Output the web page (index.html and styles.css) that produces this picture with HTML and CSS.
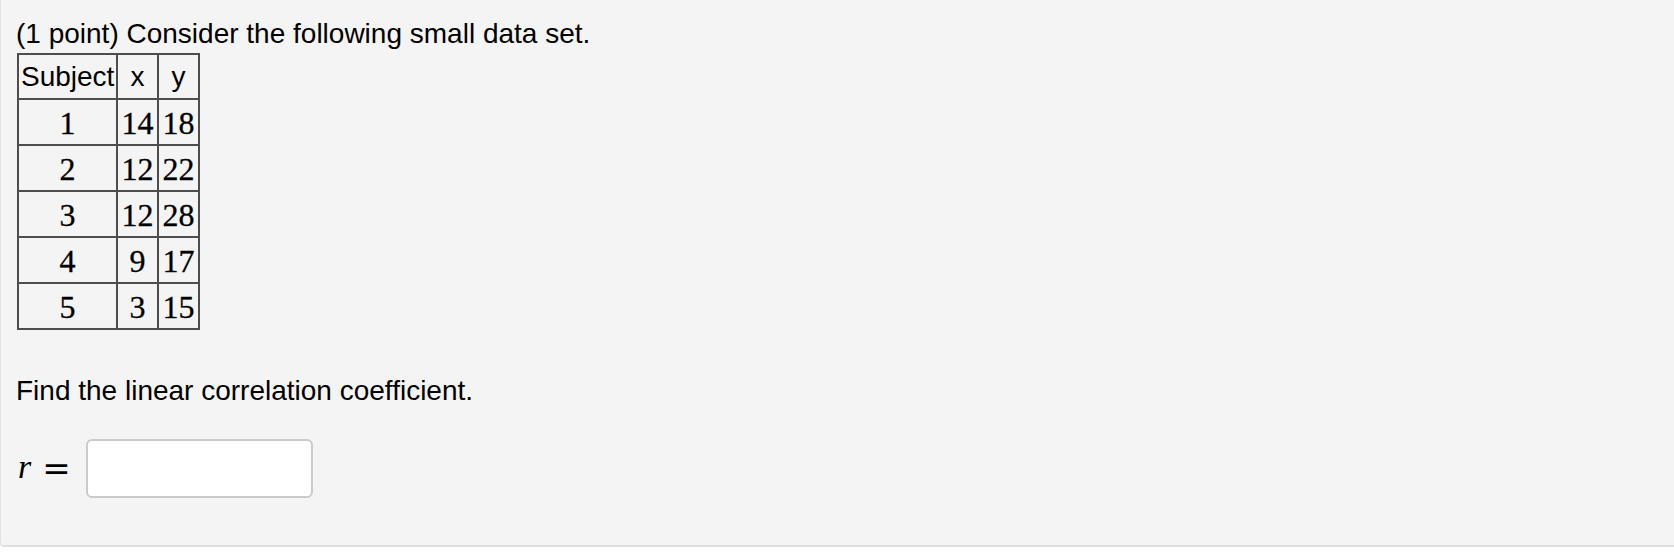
FILE: index.html
```html
<!DOCTYPE html>
<html>
<head>
<meta charset="utf-8">
<link rel="stylesheet" href="styles.css">
</head>
<body>
<div class="problem">
  <div class="title">(1 point) Consider the following small data set.</div>
  <table class="data">
    <tr class="head"><td class="c-subj">Subject</td><td class="c-num">x</td><td class="c-num">y</td></tr>
    <tr><td class="math">1</td><td class="math">14</td><td class="math">18</td></tr>
    <tr><td class="math">2</td><td class="math">12</td><td class="math">22</td></tr>
    <tr><td class="math">3</td><td class="math">12</td><td class="math">28</td></tr>
    <tr><td class="math">4</td><td class="math">9</td><td class="math">17</td></tr>
    <tr><td class="math">5</td><td class="math">3</td><td class="math">15</td></tr>
  </table>
  <p class="question">Find the linear correlation coefficient.</p>
  <div class="answer">
    <span class="mvar">r</span><span class="meq">=</span>
    <input class="box" type="text">
  </div>
</div>
</body>
</html>
```
FILE: styles.css
```css
html, body {
  margin: 0;
  padding: 0;
  background: #ffffff;
}
.problem {
  box-sizing: border-box;
  height: 547px;
  background: #f4f4f4;
  border-left: 1px solid #e2e2e2;
  border-bottom: 2px solid #e0e0e0;
  border-bottom-left-radius: 4px;
  padding: 17px 0 0 15px;
  font-family: "Liberation Sans", Arial, sans-serif;
  font-size: 28px;
  line-height: 34px;
  color: #000;
}
.title {
  white-space: nowrap;
}
.data {
  margin: 2px 0 0 1px;
  border-collapse: separate;
  border-spacing: 0;
  border-top: 2px solid #4d4d4d;
  border-left: 2px solid #4d4d4d;
}
.data td {
  box-sizing: border-box;
  padding: 0;
  height: 46px;
  border-right: 2px solid #4d4d4d;
  border-bottom: 2px solid #4d4d4d;
  text-align: center;
  vertical-align: middle;
}
.data td:nth-child(1) { width: 99px; }
.data td:nth-child(2) { width: 41px; }
.data td:nth-child(3) { width: 41px; }
.data .head td {
  height: 45px;
  font-size: 28px;
  line-height: 32px;
}
.data .head .c-subj {
  text-align: left;
  padding-left: 2px;
}
.data td.math {
  font-family: "Liberation Serif", "Times New Roman", serif;
  font-size: 32px;
  line-height: 34px;
  padding-top: 1px;
  -webkit-text-stroke: 0.3px #000;
}
.question {
  margin: 44px 0 0 0;
  white-space: nowrap;
}
.answer {
  display: flex;
  align-items: center;
  margin-top: 31px;
  padding-left: 2px;
}
.mvar {
  font-family: "Liberation Serif", "Times New Roman", serif;
  font-style: italic;
  font-size: 34px;
  line-height: 40px;
  margin-right: 11px;
  margin-top: -4px;
}
.meq {
  font-family: "DejaVu Serif", serif;
  font-size: 34px;
  line-height: 40px;
  margin-right: 15px;
  margin-top: -2px;
}
.box {
  box-sizing: border-box;
  width: 227px;
  height: 59px;
  background: #ffffff;
  border: 2px solid #cbcbcb;
  border-radius: 6px;
  padding: 0 8px;
  font-size: 24px;
  outline: none;
}
```
